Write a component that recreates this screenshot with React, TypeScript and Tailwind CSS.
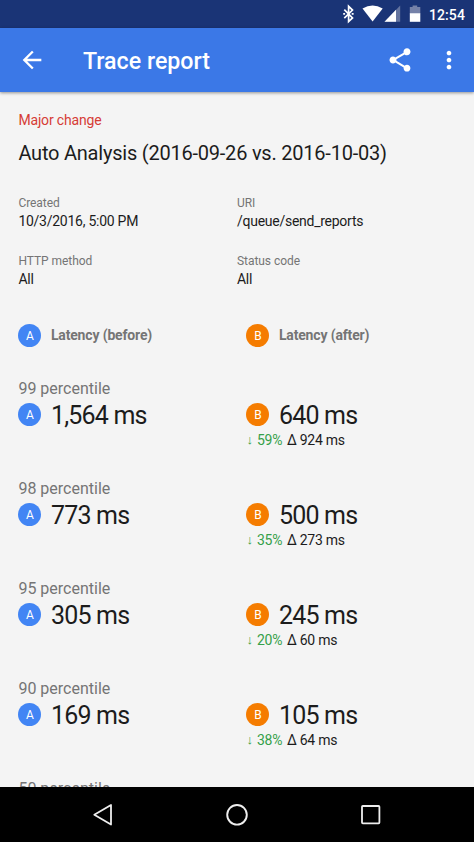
import React from "react";

type Measurement = {
  percentile: number;
  before: string;
  after: string;
  change: string;
  delta: string;
};

const measurements: Measurement[] = [
  { percentile: 99, before: "1,564", after: "640", change: "59%", delta: "924" },
  { percentile: 98, before: "773", after: "500", change: "35%", delta: "273" },
  { percentile: 95, before: "305", after: "245", change: "20%", delta: "60" },
  { percentile: 90, before: "169", after: "105", change: "38%", delta: "64" },
];

const details = [
  { label: "Created", value: "10/3/2016, 5:00 PM" },
  { label: "URI", value: "/queue/send_reports" },
  { label: "HTTP method", value: "All" },
  { label: "Status code", value: "All" },
];

const Badge: React.FC<{ letter: "A" | "B" }> = ({ letter }) => (
  <span
    className={`flex h-[23px] w-[23px] shrink-0 items-center justify-center rounded-full pt-px text-[12px] leading-none font-normal tracking-normal text-white ${
      letter === "A" ? "bg-[#4285f4]" : "bg-[#f57c00]"
    }`}
  >
    {letter}
  </span>
);

const StatusBar: React.FC = () => (
  <div className="flex h-7 shrink-0 items-center justify-end bg-[#1a3476] pr-[9px] text-white">
    <svg width="88" height="28" viewBox="0 0 88 28" className="mr-[3px]">
      {/* Bluetooth */}
      <path
        d="M6.3 9.6l8.2 8.3-3.9 3.6V6.3l3.9 3.8-8.2 8"
        fill="none"
        stroke="currentColor"
        strokeWidth="1.7"
      />
      <path d="M5.2 12.9h1.9v1.9H5.2zM13.7 12.9h1.9v1.9h-1.9z" fill="currentColor" />
      {/* Wifi */}
      <path d="M24.5 8.6Q34.6 2.2 44.7 8.6L34.6 21.4z" fill="currentColor" />
      {/* Signal */}
      <path d="M62.2 5.4v16.4H46.5z" fill="#64749f" />
      <path d="M58 9.8v12H46.5z" fill="currentColor" />
      {/* Battery */}
      <path d="M74.6 5.4h4.6v1.7h3.1v6.3H71.8V7.1h2.8z" fill="#7581a8" />
      <path d="M71.8 13.2h10.5v8.6H71.8z" fill="currentColor" />
    </svg>
    <span className="pt-px text-[14px] leading-7 font-medium tracking-[0.1px]">12:54</span>
  </div>
);

const AppBar: React.FC = () => (
  <header className="z-10 flex h-16 shrink-0 items-center bg-[#3b78e7] text-white shadow-[0_1px_3px_rgba(0,0,0,0.4)]">
    <button className="ml-[18px] h-7 w-7" aria-label="Back">
      <svg width="28" height="28" viewBox="0 0 24 24" fill="currentColor">
        <path d="M20 11H7.83l5.59-5.59L12 4l-8 8 8 8 1.41-1.41L7.83 13H20v-2z" />
      </svg>
    </button>
    <h1 className="ml-[37px] pt-0.5 text-[23.2px] leading-8 font-medium">Trace report</h1>
    <button className="ml-auto h-7 w-7" aria-label="Share">
      <svg width="28" height="28" viewBox="0 0 24 24" fill="currentColor">
        <path d="M18 16.08c-.76 0-1.44.3-1.96.77L8.91 12.7c.05-.23.09-.46.09-.7s-.04-.47-.09-.7l7.05-4.11c.54.5 1.25.81 2.04.81 1.66 0 3-1.34 3-3s-1.34-3-3-3-3 1.34-3 3c0 .24.04.47.09.7L8.04 9.81C7.5 9.31 6.79 9 6 9c-1.66 0-3 1.34-3 3s1.34 3 3 3c.79 0 1.5-.31 2.04-.81l7.12 4.16c-.05.21-.08.43-.08.65 0 1.61 1.31 2.92 2.92 2.92 1.61 0 2.92-1.31 2.92-2.92s-1.31-2.92-2.92-2.92z" />
      </svg>
    </button>
    <button className="mr-[11px] ml-[21px] h-7 w-7" aria-label="More">
      <svg width="28" height="28" viewBox="0 0 24 24" fill="currentColor">
        <path d="M12 8c1.1 0 2-.9 2-2s-.9-2-2-2-2 .9-2 2 .9 2 2 2zm0 2c-1.1 0-2 .9-2 2s.9 2 2 2 2-.9 2-2-.9-2-2-2zm0 6c-1.1 0-2 .9-2 2s.9 2 2 2 2-.9 2-2-.9-2-2-2z" />
      </svg>
    </button>
  </header>
);

const MeasurementRow: React.FC<{ item: Measurement }> = ({ item }) => (
  <section className="h-[100px]">
    <h3 className="text-[16px] leading-5 text-[#757575]">{item.percentile} percentile</h3>
    <div className="grid grid-cols-[228px_1fr]">
      <div className="flex h-[31px] items-center gap-[9.5px]">
        <Badge letter="A" />
        <span className="pt-1 text-[25px] leading-7 tracking-[-0.8px]">{item.before} ms</span>
      </div>
      <div>
        <div className="flex h-[31px] items-center gap-[9.5px]">
          <Badge letter="B" />
          <span className="pt-1 text-[25px] leading-7 tracking-[-0.8px]">{item.after} ms</span>
        </div>
        <p className="mt-px flex text-[14px] leading-[18px] tracking-[-0.25px]">
          <span className="w-[10.5px] font-['Liberation_Serif',serif] text-[13px] text-[#35a049]">↓</span>
          <span className="w-[30px] text-[#35a049]">{item.change}</span>
          <span>Δ {item.delta} ms</span>
        </p>
      </div>
    </div>
  </section>
);

const NavigationBar: React.FC = () => (
  <nav className="flex h-[55px] shrink-0 items-center justify-center gap-[106px] bg-black text-[#eee]">
    <svg width="28" height="28" viewBox="0 0 28 28" fill="none" stroke="currentColor" strokeWidth="1.8">
      <path d="M22 4v19.5L5.3 13.8z" strokeLinejoin="round" />
    </svg>
    <svg width="28" height="28" viewBox="0 0 28 28" fill="none" stroke="currentColor" strokeWidth="1.9">
      <circle cx="14" cy="13.8" r="9.8" />
    </svg>
    <svg width="28" height="28" viewBox="0 0 28 28" fill="none" stroke="currentColor" strokeWidth="1.8">
      <rect x="5" y="5" width="17.4" height="17.4" rx="0.8" />
    </svg>
  </nav>
);

const App: React.FC = () => {
  return (
    <div className="flex h-[842px] w-[474px] flex-col overflow-hidden bg-[#f4f4f4] font-['Roboto',sans-serif] text-[#1c1c1c]">
      <StatusBar />
      <AppBar />
      <main className="min-h-0 flex-1 overflow-hidden pt-[18px] pl-[18.4px]">
        <p className="text-[14px] leading-5 tracking-[-0.17px] text-[#d63c36]">Major change</p>
        <h2 className="mt-2 pt-px text-[20px] leading-7 tracking-[-0.22px]">
          Auto Analysis (2016-09-26 vs. 2016-10-03)
        </h2>

        <dl className="mt-[27px] grid grid-cols-[218.6px_1fr] gap-y-[21px]">
          {details.map((detail) => (
            <div key={detail.label}>
              <dt className="text-[12px] leading-[18px] tracking-[-0.05px] text-[#757575]">{detail.label}</dt>
              <dd className="pb-px text-[14px] leading-[18px] tracking-[-0.26px]">{detail.value}</dd>
            </div>
          ))}
        </dl>

        <div className="mt-[34.5px] grid grid-cols-[228px_1fr] text-[14px] leading-[23px] font-bold tracking-[-0.16px] text-[#757575]">
          <div className="flex items-center gap-[9.5px]">
            <Badge letter="A" />
            <span>Latency (before)</span>
          </div>
          <div className="flex items-center gap-[9.5px]">
            <Badge letter="B" />
            <span>Latency (after)</span>
          </div>
        </div>

        <div className="mt-8">
          {measurements.map((item) => (
            <MeasurementRow key={item.percentile} item={item} />
          ))}
          <h3 className="text-[16px] leading-5 text-[#757575]">50 percentile</h3>
        </div>
      </main>
      <NavigationBar />
    </div>
  );
};

export default App;
